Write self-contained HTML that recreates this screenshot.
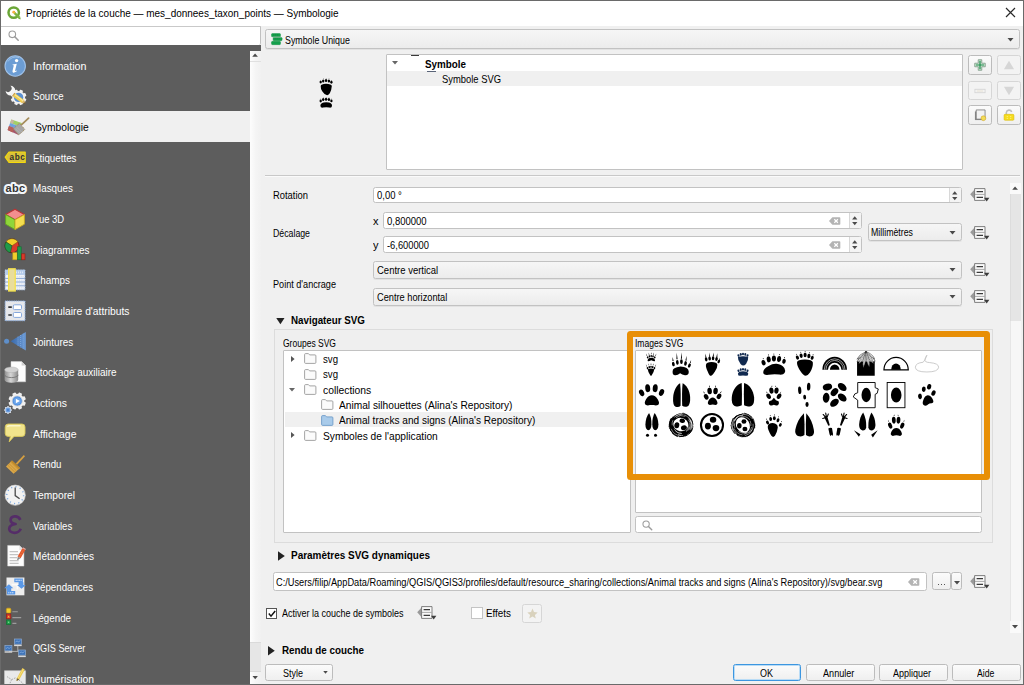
<!DOCTYPE html>
<html><head><meta charset="utf-8"><title>QGIS</title>
<style>
html,body{margin:0;padding:0;}
body{width:1024px;height:685px;overflow:hidden;background:#f0f0f0;font-family:"Liberation Sans",sans-serif;}
#w{position:relative;width:1024px;height:685px;overflow:hidden;}
#w>div{position:absolute;}
#w svg{display:block;width:100%;height:100%;overflow:visible;}
.t{position:absolute;white-space:nowrap;line-height:16px;height:16px;transform-origin:0 50%;display:inline-block;}
.field{background:#fff;border:1px solid #c2c2c2;box-sizing:border-box;border-radius:2.5px;}
.combo{background:linear-gradient(#f6f6f6,#ececec);border:1px solid #c2c2c2;box-sizing:border-box;border-radius:2.5px;box-shadow:0 1px 0 #e2e2e2;}
.btn{background:linear-gradient(#fbfbfb,#efefef);border:1px solid #bcbcbc;box-sizing:border-box;border-radius:2.5px;}
.btn.dis{border-color:#d6d6d6;background:#f3f3f3;}
</style></head>
<body><div id="w">
<div style="left:0px;top:0px;width:1024px;height:685px;background:#f0f0f0;"></div>
<div style="left:1px;top:1px;width:1022px;height:24.8px;background:#fff;"></div>
<div style="left:1px;top:25.8px;width:260px;height:1px;background:#c9c9c9;"></div>
<div style="left:7.2px;top:5.6px;width:14px;height:14px"><svg viewBox="0 0 14 14"><circle cx="6.7" cy="6.6" r="5.2" fill="none" stroke="#6aa636" stroke-width="2.5"/><path d="M7.4 6.8L12.6 11.8" stroke="#7bb342" stroke-width="2.4"/><path d="M11.2 12.6L13.4 13.4L13.6 11.4Z" fill="#6aa636"/><circle cx="6.8" cy="6.2" r="1.4" fill="#f0a830"/><path d="M5.8 5.2L7.8 7.4" stroke="#f6c860" stroke-width="0.7"/></svg></div>
<div style="left:1004.9px;top:7.1px;width:11px;height:11px"><svg viewBox="0 0 11 11"><path d="M1 1L10 10M10 1L1 10" stroke="#2a2a2a" stroke-width="1.15" fill="none"/></svg></div>
<div style="left:1px;top:26.6px;width:259.5px;height:18.1px;background:#fff;border-right:1px solid #c0c0c0;box-sizing:border-box;border-radius:0 0 2px 0;"></div>
<div style="left:8px;top:30px;width:11px;height:11px"><svg viewBox="0 0 11 11"><circle cx="4.3" cy="4.3" r="3.3" fill="none" stroke="#9c9c9c" stroke-width="1.1"/><path d="M6.8 6.8L10.2 10.2" stroke="#9c9c9c" stroke-width="1.5" stroke-linecap="round"/></svg></div>
<div style="left:1px;top:44.7px;width:260.3px;height:6.1px;background:#5d5d5d;"></div>
<div style="left:1px;top:50.5px;width:248.6px;height:640px;background:#5d5d5d;"></div>
<div style="left:1px;top:111.4px;width:248.6px;height:30.8px;background:#f0f0f0;"></div>
<div style="left:249.6px;top:50.5px;width:11.7px;height:634px;background:linear-gradient(to right,#fdfdfd,#f5f5f5 50%,#f1f1f1);"></div>
<div style="left:249.6px;top:61.3px;width:11.7px;height:1px;background:#e0e0e0;"></div>
<div style="left:249.5px;top:642.2px;width:11.6px;height:30px;background:#e6e6e6;border-top:1px solid #dadada;border-bottom:1px solid #dadada;box-sizing:border-box;"></div>
<div style="left:252.2px;top:53.2px;width:6.2px;height:3.8px"><svg viewBox="0 0 6 4"><path d="M0 4L3 0.4L6 4Z" fill="#4a4a4a"/></svg></div>
<div style="left:252.3px;top:676px;width:6.4px;height:3.6px"><svg viewBox="0 0 6 4"><path d="M0 0L6 0L3 3.6Z" fill="#4a4a4a"/></svg></div>
<div style="left:3.2px;top:53.52px;width:24px;height:24px"><svg viewBox="0 0 24 24"><circle cx="12.2" cy="12" r="10.2" fill="#6c9dd4" stroke="#9fc2ea" stroke-width="1.1"/><path d="M5 7.5A9 9 0 0 1 16 3.6" stroke="#b9d5f2" stroke-width="1" fill="none" opacity=".6"/><circle cx="13.6" cy="6.6" r="1.7" fill="#fff"/><path d="M9.6 10.4L13.8 9.8L12.1 16.4Q11.9 17.4 13.6 16.6L13.8 17.2Q10.8 19.2 9.9 18.4Q9.2 17.8 9.6 16.4L10.8 11.6Q10.9 11 9.5 11Z" fill="#fff"/></svg></div>
<div style="left:3.2px;top:84.17px;width:24px;height:24px"><svg viewBox="0 0 24 24"><path d="M7.4 1.8A4.9 4.9 0 1 1 2.6 7A3.3 3.3 0 0 0 7.4 1.8Z" fill="#f6f6f6"/><path d="M8.6 8.6L13 13" stroke="#f2f2f2" stroke-width="3.2"/><circle cx="15.6" cy="13.4" r="6.4" fill="#f1f1f1"/><rect x="13.95" y="5.50" width="3.3" height="2.70" rx="0.7" fill="#f1f1f1" transform="rotate(22.5 15.6 13.4)"/><rect x="13.95" y="5.50" width="3.3" height="2.70" rx="0.7" fill="#f1f1f1" transform="rotate(67.5 15.6 13.4)"/><rect x="13.95" y="5.50" width="3.3" height="2.70" rx="0.7" fill="#f1f1f1" transform="rotate(112.5 15.6 13.4)"/><rect x="13.95" y="5.50" width="3.3" height="2.70" rx="0.7" fill="#f1f1f1" transform="rotate(157.5 15.6 13.4)"/><rect x="13.95" y="5.50" width="3.3" height="2.70" rx="0.7" fill="#f1f1f1" transform="rotate(202.5 15.6 13.4)"/><rect x="13.95" y="5.50" width="3.3" height="2.70" rx="0.7" fill="#f1f1f1" transform="rotate(247.5 15.6 13.4)"/><rect x="13.95" y="5.50" width="3.3" height="2.70" rx="0.7" fill="#f1f1f1" transform="rotate(292.5 15.6 13.4)"/><rect x="13.95" y="5.50" width="3.3" height="2.70" rx="0.7" fill="#f1f1f1" transform="rotate(337.5 15.6 13.4)"/><circle cx="15.6" cy="13.4" r="4.7" fill="#5b8fd0"/><path d="M12.4 9.4L21.1 15.9L18.7 19.1L10 12.6Z" fill="#f0cd4c"/><path d="M11.6 10.5L20.3 17" stroke="#f9e79a" stroke-width="1.1"/><path d="M21.1 15.9L22.8 19.6L18.7 19.1Z" fill="#d9b36a"/><path d="M22 17.9L22.8 19.6L21 19.4Z" fill="#3a2f1c"/><path d="M12.4 9.4L10 12.6L9 11.9L11.4 8.7Z" fill="#c99a3c"/></svg></div>
<div style="left:5.5px;top:114.82px;width:24px;height:24px"><svg viewBox="0 0 24 24"><path d="M5.4 4.6L15.8 7.9L14.5 11.8L4.1 8Z" fill="#a3cf68"/><path d="M5.4 4.6L8 5.4L7 8.9L4.1 8Z" fill="#c9b7a0"/><path d="M4.1 8L14.5 11.8L13.4 15.3L3 11Z" fill="#6fa2dc"/><path d="M3 11L13.4 15.3L12 19.8L1.6 15Z" fill="#a4566e"/><path d="M3 11L8 13.1L6.6 17.4L1.6 15Z" fill="#b8605a"/><path d="M15.6 9.6L22.6 3.2" stroke="#a58d5c" stroke-width="1.8" stroke-linecap="round"/><rect x="9" y="10" width="8.2" height="8.2" transform="rotate(-42 13.1 14.1)" fill="#a6a6a6" stroke="#a08a5c" stroke-width="0.8" stroke-dasharray="1.4 0.8"/><path d="M10.6 12.2L16.2 17.4M9.6 14L14.6 18.6" stroke="#b8b8b8" stroke-width="0.7"/></svg></div>
<div style="left:3.2px;top:145.47px;width:24px;height:24px"><svg viewBox="0 0 24 24"><path d="M2.2 12.2L6 7H22.2V17.5H6Z" fill="#d9c23a" stroke="#f5d90a" stroke-width="1.2" stroke-linejoin="round"/><text x="14.4" y="15.1" font-family="Liberation Sans, sans-serif" font-weight="700" font-size="8.2" letter-spacing="0.5" text-anchor="middle" fill="#2e2e2e">abc</text></svg></div>
<div style="left:3.2px;top:176.12px;width:24px;height:24px"><svg viewBox="0 0 24 24"><text x="12.4" y="15.9" font-family="Liberation Sans, sans-serif" font-weight="700" font-size="11" letter-spacing="0.3" text-anchor="middle" fill="#363636" stroke="#f3f6fa" stroke-width="4.2" stroke-linejoin="round" paint-order="stroke">abc</text></svg></div>
<div style="left:3.2px;top:206.78px;width:24px;height:24px"><svg viewBox="0 0 24 24"><path d="M12 2.2L21.4 7.6L12 12.8L2.6 7.6Z" fill="#f28e8e" stroke="#b93434" stroke-width="1.1" stroke-linejoin="round"/><path d="M2.6 7.6L12 12.8V22.6L2.6 17.2Z" fill="#8fd63a" stroke="#62a420" stroke-width="0.9" stroke-linejoin="round"/><path d="M21.4 7.6L12 12.8V22.6L21.4 17.2Z" fill="#f4de50" stroke="#c9aa20" stroke-width="0.9" stroke-linejoin="round"/></svg></div>
<div style="left:3.2px;top:237.42px;width:24px;height:24px"><svg viewBox="0 0 24 24"><circle cx="9" cy="8.8" r="7" fill="#d83a2a" stroke="#5a1a12" stroke-width="0.7"/><path d="M9 8.8L3 5A7 7 0 0 1 14.8 4.8Z" fill="#f0cf2c" stroke="#6a5a12" stroke-width="0.5"/><path d="M9 8.8L3 5A7 7 0 0 0 7.4 15.6Z" fill="#1f9a4a" stroke="#0f4a22" stroke-width="0.5"/><rect x="9.8" y="15.6" width="4.4" height="7.2" fill="#f0cf2c" stroke="#b8961c" stroke-width="0.6"/><rect x="14.6" y="9.8" width="3.6" height="13" fill="#1f9a4a" stroke="#156c33" stroke-width="0.6"/><rect x="18.6" y="16.8" width="3.4" height="6" fill="#d83a2a" stroke="#8f1f14" stroke-width="0.6"/></svg></div>
<div style="left:3.2px;top:268.07px;width:24px;height:24px"><svg viewBox="0 0 24 24"><rect x="2.1" y="1.9" width="19.9" height="20" fill="#f1f4f9" stroke="#9db4d4" stroke-width="0.9" stroke-dasharray="1.2 0.6"/><rect x="2.1" y="1.9" width="19.9" height="5" fill="#b4cbea"/><path d="M13 4.4H21" stroke="#dfe8f6" stroke-width="1.6" stroke-dasharray="1 1"/><path d="M2.1 10.4H22M2.1 14H22M2.1 17.8H22" stroke="#7f9fd0" stroke-width="0.9"/><path d="M12.4 8.7H21M12.4 12.2H21M12.4 16H21M12.4 19.8H21" stroke="#c9d6ea" stroke-width="0.8" stroke-dasharray="1 0.8"/><rect x="5.7" y="0.8" width="6.5" height="22.2" fill="#e9dd9c" stroke="#f5e24a" stroke-width="1.3"/></svg></div>
<div style="left:3.2px;top:298.72px;width:24px;height:24px"><svg viewBox="0 0 24 24"><rect x="2.1" y="2" width="19.9" height="19.7" fill="#e6e7ea" stroke="#8fb0e0" stroke-width="1" stroke-dasharray="1.2 0.6"/><rect x="10.3" y="5.8" width="8.2" height="4.8" rx="1.2" fill="#fff" stroke="#86a8dc" stroke-width="1"/><rect x="10.3" y="13.5" width="8.2" height="4.9" rx="1.2" fill="#fff" stroke="#86a8dc" stroke-width="1"/><path d="M5.3 8.2H8.8M5.3 16H8.8" stroke="#33373c" stroke-width="1.7"/></svg></div>
<div style="left:3.2px;top:329.37px;width:24px;height:24px"><svg viewBox="0 0 24 24"><defs><linearGradient id="jg" x1="0" x2="1" y1="0" y2="0"><stop offset="0" stop-color="#3868a8"/><stop offset="1" stop-color="#6b9ad6"/></linearGradient></defs><circle cx="3.6" cy="12.2" r="2.5" fill="#5f8fc9"/><path d="M7.6 12.2L22.8 3V21.4Z" fill="url(#jg)"/><path d="M15 7.6V16.8M17.6 6V18.4M20.2 4.6V19.8" stroke="#86aee0" stroke-width="0.8" stroke-dasharray="1 1"/></svg></div>
<div style="left:3.2px;top:360.02px;width:24px;height:24px"><svg viewBox="0 0 24 24"><defs><linearGradient id="dbg" x1="0" x2="1" y1="0" y2="0"><stop offset="0" stop-color="#8e8e8e"/><stop offset="0.45" stop-color="#d6d6d6"/><stop offset="1" stop-color="#8a8a8a"/></linearGradient></defs><path d="M8 1.6H18.6L22.6 5.6V21.8H8Z" fill="#fdfdfd" stroke="#d4d4d4" stroke-width="0.5"/><path d="M18.6 1.6V5.6H22.6Z" fill="#d0d0d0"/><path d="M1.6 9.8V20A6.8 2.8 0 0 0 15.2 20V9.8Z" fill="url(#dbg)"/><ellipse cx="8.4" cy="9.8" rx="6.8" ry="2.8" fill="#d2d2d2" stroke="#a8a8a8" stroke-width="0.4"/><path d="M1.6 14.8A6.8 2.8 0 0 0 15.2 14.8" stroke="#6e6e6e" stroke-width="0.8" fill="none"/></svg></div>
<div style="left:3.2px;top:390.67px;width:24px;height:24px"><svg viewBox="0 0 24 24"><circle cx="14.2" cy="10" r="7.2" fill="#f0f0f0"/><rect x="12.35" y="1.30" width="3.7" height="2.70" rx="0.7" fill="#f0f0f0" transform="rotate(22.5 14.2 10)"/><rect x="12.35" y="1.30" width="3.7" height="2.70" rx="0.7" fill="#f0f0f0" transform="rotate(67.5 14.2 10)"/><rect x="12.35" y="1.30" width="3.7" height="2.70" rx="0.7" fill="#f0f0f0" transform="rotate(112.5 14.2 10)"/><rect x="12.35" y="1.30" width="3.7" height="2.70" rx="0.7" fill="#f0f0f0" transform="rotate(157.5 14.2 10)"/><rect x="12.35" y="1.30" width="3.7" height="2.70" rx="0.7" fill="#f0f0f0" transform="rotate(202.5 14.2 10)"/><rect x="12.35" y="1.30" width="3.7" height="2.70" rx="0.7" fill="#f0f0f0" transform="rotate(247.5 14.2 10)"/><rect x="12.35" y="1.30" width="3.7" height="2.70" rx="0.7" fill="#f0f0f0" transform="rotate(292.5 14.2 10)"/><rect x="12.35" y="1.30" width="3.7" height="2.70" rx="0.7" fill="#f0f0f0" transform="rotate(337.5 14.2 10)"/><circle cx="14.2" cy="10" r="5.1" fill="#4f8fe0" stroke="#d6d6d6" stroke-width="0.8"/><circle cx="14.2" cy="10" r="3.6" fill="#6aa4ea"/><path d="M12.9 7.7L16.9 10L12.9 12.3Z" fill="#fff"/><circle cx="5" cy="19" r="3.0" fill="#dfe6f0"/><rect x="4.15" y="15.10" width="1.7" height="2.10" rx="0.7" fill="#dfe6f0" transform="rotate(0.0 5 19)"/><rect x="4.15" y="15.10" width="1.7" height="2.10" rx="0.7" fill="#dfe6f0" transform="rotate(45.0 5 19)"/><rect x="4.15" y="15.10" width="1.7" height="2.10" rx="0.7" fill="#dfe6f0" transform="rotate(90.0 5 19)"/><rect x="4.15" y="15.10" width="1.7" height="2.10" rx="0.7" fill="#dfe6f0" transform="rotate(135.0 5 19)"/><rect x="4.15" y="15.10" width="1.7" height="2.10" rx="0.7" fill="#dfe6f0" transform="rotate(180.0 5 19)"/><rect x="4.15" y="15.10" width="1.7" height="2.10" rx="0.7" fill="#dfe6f0" transform="rotate(225.0 5 19)"/><rect x="4.15" y="15.10" width="1.7" height="2.10" rx="0.7" fill="#dfe6f0" transform="rotate(270.0 5 19)"/><rect x="4.15" y="15.10" width="1.7" height="2.10" rx="0.7" fill="#dfe6f0" transform="rotate(315.0 5 19)"/><circle cx="5" cy="19" r="2.5" fill="#6ea0e0"/><circle cx="5" cy="19" r="1.2" fill="#4a80cc"/></svg></div>
<div style="left:3.2px;top:421.32px;width:24px;height:24px"><svg viewBox="0 0 24 24"><path d="M5.2 3H19Q22 3 22 6V12.4Q22 15.4 19 15.4H11L6.2 20.8L7.4 15.4H5.2Q2.2 15.4 2.2 12.4V6Q2.2 3 5.2 3Z" fill="#f1e48c" stroke="#d9c85a" stroke-width="0.9"/><path d="M4.6 6Q4.6 4.8 6.4 4.8H17.6" stroke="#fbf6c8" stroke-width="1.4" fill="none"/></svg></div>
<div style="left:3.2px;top:451.97px;width:24px;height:24px"><svg viewBox="0 0 24 24"><path d="M12.8 11.4L20.8 3L22 4.2L14.2 12.8Z" fill="#d7a040"/><path d="M9 8.4L17 16L10.6 21.8L3 14.6Z" fill="#dba84a"/><path d="M7.6 10L15.2 17.4M6 11.6L13.6 19M4.6 13L12 20.4" stroke="#c08a28" stroke-width="0.7"/><path d="M9 8.4L17 16L15.9 17L7.9 9.4Z" fill="#bd8626"/></svg></div>
<div style="left:3.2px;top:482.62px;width:24px;height:24px"><svg viewBox="0 0 24 24"><circle cx="12.2" cy="12.2" r="10.1" fill="#f2f2f2" stroke="#dadada" stroke-width="0.7"/><circle cx="12.2" cy="12.2" r="8.4" fill="none" stroke="#7aa7e0" stroke-width="1.4" stroke-dasharray="1.1 3.3"/><path d="M12.2 4.4V12.6L16.6 15.8" stroke="#4a4a4a" stroke-width="1.3" fill="none"/></svg></div>
<div style="left:3.2px;top:513.27px;width:24px;height:24px"><svg viewBox="0 0 24 24"><path d="M17.4 6.8Q15.6 3.2 11.8 3.4Q7.6 3.8 7.6 7.2Q7.8 10.4 12.6 11Q6.4 11.6 6.2 15.8Q6.4 19.6 11.6 19.8Q16 19.8 17.8 15.8" fill="none" stroke="#552d68" stroke-width="2.7" stroke-linejoin="round"/></svg></div>
<div style="left:3.2px;top:543.92px;width:24px;height:24px"><svg viewBox="0 0 24 24"><path d="M4.7 1.4H16.4L20.9 5.9V22.1H4.7Z" fill="#fdfdfd" stroke="#d4d4d4" stroke-width="0.5"/><path d="M16.4 1.4V5.9H20.9Z" fill="#e2e2e2"/><path d="M6.6 7.6H15M6.6 10.6H15.6M6.6 13.6H14M6.6 16.6H15.6M6.6 19.4H15.6" stroke="#c4c4c4" stroke-width="1.1"/><path d="M17.59 14.17L22.34 6.07L19.4 4.35L14.65 12.45Z" fill="#e4572c"/><path d="M16.6 12.6L20.4 6.2" stroke="#f08a4a" stroke-width="0.9" stroke-dasharray="1 1"/><path d="M22.34 6.07L19.4 4.35L20 3.32L22.95 5.04Z" fill="#eaa8a0"/><path d="M17.59 14.17L14.65 12.45L14.6 15.9Z" fill="#8e8e8e"/><path d="M15.5 14.9L14.6 15.9L14.62 14.4Z" fill="#3a3a3a"/></svg></div>
<div style="left:3.2px;top:574.57px;width:24px;height:24px"><svg viewBox="0 0 24 24"><rect x="3.5" y="2.5" width="17.9" height="17.8" fill="#ededed"/><path d="M8.6 9.6H14.4V14.6" fill="none" stroke="#fafafa" stroke-width="1.6"/><path d="M11.3 3.5H19.9V7.3H20.4V10H22.8L18.5 13.8L14.1 10H15.6V7.3H11.3Z" fill="#5a98e6"/><path d="M12.6 5.4H18.6" stroke="#cfe2fa" stroke-width="1.1" stroke-dasharray="1.2 0.6"/><path d="M5.96 9.3L10.3 13.3H8.2V16H12.2V19.6H4V16H3.7V13.3H1.1Z" fill="#5a98e6"/><path d="M5.2 17.8H11" stroke="#cfe2fa" stroke-width="1.1" stroke-dasharray="1.2 0.6"/></svg></div>
<div style="left:3.2px;top:605.22px;width:24px;height:24px"><svg viewBox="0 0 24 24"><rect x="3.4" y="3.2" width="4.4" height="4.8" rx="1.2" fill="#f0cf2c" stroke="#d49a1a" stroke-width="0.7"/><rect x="3.4" y="9" width="4.4" height="4.8" fill="#d83a2a" stroke="#9a1f14" stroke-width="0.7"/><path d="M4.4 12.6L5.6 10.4L6.8 12.6Z" fill="#f4c43c"/><rect x="3.4" y="15" width="4.4" height="4.6" fill="#1f9a4a" stroke="#14702f" stroke-width="0.7"/><circle cx="5.6" cy="17.3" r="0.8" fill="#7fe08a"/><path d="M9.4 6.8H14.8M9.4 12.6H18.2M9.4 18.4H13.4" stroke="#9c9c9c" stroke-width="1.1"/></svg></div>
<div style="left:3.2px;top:635.88px;width:24px;height:24px"><svg viewBox="0 0 24 24"><path d="M6 15.4H15.4M14.8 9V15.4" stroke="#b0b0b0" stroke-width="1" fill="none"/><rect x="1.9" y="9.6" width="7" height="5.2" fill="#3f74b8" stroke="#8fabcf" stroke-width="0.7"/><path d="M2.9 12.6L4.5 11.6L6.300000000000001 12.399999999999999L7.9 11.0" stroke="#8fb4e4" stroke-width="0.7" fill="none"/><rect x="1.5999999999999999" y="15.3" width="7.6" height="1.4" fill="#d8d8d8"/><rect x="11.4" y="3" width="7" height="5.2" fill="#3f74b8" stroke="#8fabcf" stroke-width="0.7"/><path d="M12.4 6L14.0 5L15.8 5.8L17.4 4.4" stroke="#8fb4e4" stroke-width="0.7" fill="none"/><rect x="11.1" y="8.7" width="7.6" height="1.4" fill="#d8d8d8"/><rect x="15.5" y="14" width="7" height="5.2" fill="#3f74b8" stroke="#8fabcf" stroke-width="0.7"/><path d="M16.5 17L18.1 16L19.9 16.8L21.5 15.4" stroke="#8fb4e4" stroke-width="0.7" fill="none"/><rect x="15.2" y="19.7" width="7.6" height="1.4" fill="#d8d8d8"/></svg></div>
<div style="left:3.2px;top:666.52px;width:24px;height:24px"><svg viewBox="0 0 24 24"><path d="M1.5 3.7H22.6V24H1.5Z" fill="#e9e9e9" stroke="#d0d0d0" stroke-width="0.5"/><path d="M4 9.6L8.6 12.6L6.4 17.6L11 19.6M8.6 12.6L13 10.6M16 13L20 16.4L18 20" stroke="#a4a4a4" stroke-width="0.9" fill="none" stroke-dasharray="1.6 1"/><path d="M13.9 11.2L19.4 1.1L21.8 2.4L16.3 12.5L13.6 13.9Z" fill="#ebc94e"/><path d="M15 11.6L20.4 2" stroke="#f7e28a" stroke-width="0.8"/><path d="M13.9 11.2L16.3 12.5L13.6 13.9Z" fill="#6a5a3a"/></svg></div>
<div class="combo" style="left:265.3px;top:29.3px;width:755px;height:19.7px;"></div>
<div style="left:271.3px;top:33px;width:11.5px;height:12.2px"><svg viewBox="0 0 11.5 11.5"><rect x="0.5" y="0.2" width="9" height="3.3" rx="0.9" fill="#14a04c" stroke="#0b8a3c" stroke-width="0.4"/><rect x="2.1" y="4.1" width="9" height="3.3" rx="0.9" fill="#14a04c" stroke="#0b8a3c" stroke-width="0.4"/><rect x="0.5" y="8" width="9" height="3.3" rx="0.9" fill="#14a04c" stroke="#0b8a3c" stroke-width="0.4"/><path d="M2 1.5H8M3.6 5.4H9.6" stroke="#0b7a36" stroke-width="0.5" stroke-dasharray="1.2 0.8"/><path d="M2.6 3.8H9.4" stroke="#9ab0a0" stroke-width="0.6"/></svg></div>
<div style="left:1007px;top:37.5px;width:7px;height:4px"><svg viewBox="0 0 6 4"><path d="M0 0L6 0L3 3.6Z" fill="#4a4a4a"/></svg></div>
<div style="left:318.9px;top:77.5px;width:14px;height:30px"><svg viewBox="0 0 14 30"><g fill="#000"><ellipse cx="1.7" cy="4.1" rx="1.15" ry="1.45"/><ellipse cx="4.2" cy="2.9" rx="1.2" ry="1.5"/><ellipse cx="7.05" cy="2.4" rx="1.2" ry="1.5"/><ellipse cx="9.9" cy="2.9" rx="1.2" ry="1.5"/><ellipse cx="12.4" cy="4.2" rx="1.15" ry="1.45"/><path d="M1.4 1.9L1.7 2.8L2 1.9ZM4 0.6L4.3 1.5L4.6 0.6ZM6.8 0.2L7.1 1.1L7.4 0.2ZM9.7 0.6L10 1.5L10.3 0.6ZM12.3 2L12.6 2.9L12.9 2Z"/><path d="M1.7 8Q2 5.9 7 5.7Q12.4 5.9 12.8 8Q12.6 12 10.8 15.2Q9 17.6 7.6 17.1Q5.4 16.4 3.4 13.4Q1.4 10.4 1.7 8Z"/><ellipse cx="1.7" cy="23" rx="1.15" ry="1.45"/><ellipse cx="4.2" cy="21.6" rx="1.2" ry="1.5"/><ellipse cx="7.05" cy="21.2" rx="1.2" ry="1.5"/><ellipse cx="9.9" cy="21.6" rx="1.2" ry="1.5"/><ellipse cx="12.4" cy="22.9" rx="1.15" ry="1.45"/><path d="M1.4 20.8L1.7 21.6L2 20.8ZM4 19.4L4.3 20.2L4.6 19.4ZM6.8 19L7.1 19.8L7.4 19ZM9.7 19.4L10 20.2L10.3 19.4ZM12.3 20.7L12.6 21.5L12.9 20.7Z"/><path d="M1.4 27.8Q1.4 25.4 4.6 24.6Q7.2 23.9 10 24.6Q13 25.4 13 27.8Q13 29.9 10.4 29.6Q7.2 28.8 4 29.6Q1.4 29.9 1.4 27.8Z"/></g></svg></div>
<div class="field" style="left:386px;top:54.3px;width:576.5px;height:115.6px;border-radius:1px;"></div>
<div style="left:387px;top:71.3px;width:574.5px;height:15.2px;background:#f0f0f0;"></div>
<div style="left:392px;top:61px;width:6px;height:4px"><svg viewBox="0 0 6 4"><path d="M0 0L6 0L3 3.6Z" fill="#666"/></svg></div>
<div style="left:410.6px;top:55.4px;width:8.6px;height:1.1px;background:#3a3a3a;"></div>
<div style="left:427.4px;top:71.2px;width:9px;height:1.1px;background:#5a6478;"></div>
<div class="btn" style="left:968.4px;top:55.2px;width:23.3px;height:19.8px;"><div style="left:4.6px;top:3.2px;width:12px;height:12px;position:absolute"><svg viewBox="0 0 13 13"><path d="M4.6 0.8H8.4V4.6H12.2V8.4H8.4V12.2H4.6V8.4H0.8V4.6H4.6Z" fill="#d4ead9" stroke="#7a9a84" stroke-width="0.9"/><path d="M6.5 2V11M2 6.5H11" stroke="#1d8a4a" stroke-width="1.3"/></svg></div></div>
<div class="btn dis" style="left:997.3px;top:55.2px;width:23.3px;height:19.8px;"><div style="left:4.6px;top:3.2px;width:12px;height:12px;position:absolute"><svg viewBox="0 0 13 13"><path d="M6.5 2L12 11H1Z" fill="#d6d6d6"/></svg></div></div>
<div class="btn dis" style="left:968.4px;top:80.5px;width:23.3px;height:19.8px;"><div style="left:4.6px;top:3.2px;width:12px;height:12px;position:absolute"><svg viewBox="0 0 13 13"><rect x="1" y="4.6" width="11" height="3.8" fill="#f4f4f4" stroke="#d0d0d0" stroke-width="0.8"/><path d="M3 6.5H10" stroke="#e6e0d0" stroke-width="1"/></svg></div></div>
<div class="btn dis" style="left:997.3px;top:80.5px;width:23.3px;height:19.8px;"><div style="left:4.6px;top:3.2px;width:12px;height:12px;position:absolute"><svg viewBox="0 0 13 13"><path d="M1 2H12L6.5 11Z" fill="#d6d6d6"/></svg></div></div>
<div class="btn" style="left:968.4px;top:104.8px;width:23.3px;height:19.8px;"><div style="left:4.6px;top:3.2px;width:12px;height:12px;position:absolute"><svg viewBox="0 0 13 13"><path d="M1 2.6H9.4V12H1Z" fill="#8a8a8a"/><path d="M2.4 1H12V11H2.4Z" fill="#f2f2f2" stroke="#6e6e6e" stroke-width="0.8"/><circle cx="10.2" cy="10" r="2.6" fill="#f2dc58" stroke="#d0a422" stroke-width="0.6"/></svg></div></div>
<div class="btn" style="left:997.3px;top:104.8px;width:23.3px;height:19.8px;"><div style="left:4.6px;top:3.2px;width:12px;height:12px;position:absolute"><svg viewBox="0 0 13 13"><path d="M3.6 6V3.8A3 3 0 0 1 9.4 3.2" fill="none" stroke="#bdbdbd" stroke-width="1.7"/><rect x="1.2" y="5.8" width="10.6" height="6.4" rx="1" fill="#f6dc1e" stroke="#d9b800" stroke-width="0.6"/><path d="M4 8.2H5.5M7.5 8.2H9M4 10.2H5.5M7.5 10.2H9" stroke="#fff58a" stroke-width="0.8"/></svg></div></div>
<div style="left:265.3px;top:175px;width:755px;height:1px;background:#c8c8c8;"></div>
<div style="left:265.3px;top:176px;width:755px;height:1px;background:#fafafa;"></div>
<div style="left:1009.5px;top:182.6px;width:11.3px;height:450.4px;background:#fafafa;"></div>
<div style="left:1009.5px;top:194.2px;width:11.3px;height:126.8px;background:#e5e5e5;border-left:1px solid #dcdcdc;box-sizing:border-box;"></div>
<div style="left:1009.5px;top:321px;width:11.3px;height:300px;background:#f7f7f7;border-left:1px solid #e6e6e6;box-sizing:border-box;"></div>
<div style="left:1012px;top:186.4px;width:6.2px;height:3.8px"><svg viewBox="0 0 6 4"><path d="M0 4L3 0.4L6 4Z" fill="#4a4a4a"/></svg></div>
<div style="left:1011.7px;top:625px;width:6px;height:4px"><svg viewBox="0 0 6 4"><path d="M0 0L6 0L3 3.6Z" fill="#4a4a4a"/></svg></div>
<div class="field" style="left:372.6px;top:186.5px;width:589px;height:16.8px;"></div>
<div style="left:949px;top:188px;width:11.5px;height:14.3px;border-left:1px solid #d8d8d8;background:#f4f4f4;box-sizing:border-box;"></div>
<div style="left:952.3px;top:190.5px;width:5.5px;height:3.5px"><svg viewBox="0 0 6 4"><path d="M0 4L3 0.4L6 4Z" fill="#4a4a4a"/></svg></div><div style="left:952.3px;top:196.5px;width:5.5px;height:3.5px"><svg viewBox="0 0 6 4"><path d="M0 0L6 0L3 3.6Z" fill="#4a4a4a"/></svg></div>
<div style="left:970px;top:188px;width:19.5px;height:14.5px"><svg viewBox="0 0 19.5 14.5"><path d="M0.2 6.3L4.8 1.2V11.6Z" fill="#9a9a9a"/><path d="M4.6 0.6H15V12.4H4.6Z" fill="#fafafa" stroke="#727272" stroke-width="0.9"/><path d="M6.6 3.6H13M6.6 9.4H13" stroke="#3a3a3a" stroke-width="1.3"/><path d="M5 6.4H14.6" stroke="#8a8a8a" stroke-width="0.7"/><path d="M14 9.8H19.4L16.7 13.4Z" fill="#3c3c3c"/></svg></div>
<div class="field" style="left:382.8px;top:212px;width:479.2px;height:17px;"></div>
<div style="left:849px;top:213.3px;width:12px;height:14.3px;border-left:1px solid #d8d8d8;background:#f4f4f4;box-sizing:border-box;"></div>
<div style="left:852.4px;top:215.7px;width:5.5px;height:3.5px"><svg viewBox="0 0 6 4"><path d="M0 4L3 0.4L6 4Z" fill="#4a4a4a"/></svg></div><div style="left:852.4px;top:221.7px;width:5.5px;height:3.5px"><svg viewBox="0 0 6 4"><path d="M0 0L6 0L3 3.6Z" fill="#4a4a4a"/></svg></div>
<div style="left:829px;top:216.5px;width:11.5px;height:8px"><svg viewBox="0 0 11.5 8"><path d="M0 4L3.4 0.3H10.6Q11.3 0.3 11.3 1V7Q11.3 7.7 10.6 7.7H3.4Z" fill="#b4b4b4"/><path d="M5.3 2.3L8.9 5.7M8.9 2.3L5.3 5.7" stroke="#fff" stroke-width="1.2"/></svg></div>
<div class="field" style="left:382.8px;top:235.7px;width:479.2px;height:17px;"></div>
<div style="left:849px;top:237.3px;width:12px;height:14.3px;border-left:1px solid #d8d8d8;background:#f4f4f4;box-sizing:border-box;"></div>
<div style="left:852.4px;top:239.7px;width:5.5px;height:3.5px"><svg viewBox="0 0 6 4"><path d="M0 4L3 0.4L6 4Z" fill="#4a4a4a"/></svg></div><div style="left:852.4px;top:245.7px;width:5.5px;height:3.5px"><svg viewBox="0 0 6 4"><path d="M0 0L6 0L3 3.6Z" fill="#4a4a4a"/></svg></div>
<div style="left:829px;top:240.5px;width:11.5px;height:8px"><svg viewBox="0 0 11.5 8"><path d="M0 4L3.4 0.3H10.6Q11.3 0.3 11.3 1V7Q11.3 7.7 10.6 7.7H3.4Z" fill="#b4b4b4"/><path d="M5.3 2.3L8.9 5.7M8.9 2.3L5.3 5.7" stroke="#fff" stroke-width="1.2"/></svg></div>
<div class="combo" style="left:867.5px;top:223.2px;width:94px;height:18.3px;"></div>
<div style="left:948.5px;top:230.5px;width:7px;height:4px"><svg viewBox="0 0 6 4"><path d="M0 0L6 0L3 3.6Z" fill="#4a4a4a"/></svg></div>
<div style="left:970px;top:225.5px;width:19.5px;height:14.5px"><svg viewBox="0 0 19.5 14.5"><path d="M0.2 6.3L4.8 1.2V11.6Z" fill="#9a9a9a"/><path d="M4.6 0.6H15V12.4H4.6Z" fill="#fafafa" stroke="#727272" stroke-width="0.9"/><path d="M6.6 3.6H13M6.6 9.4H13" stroke="#3a3a3a" stroke-width="1.3"/><path d="M5 6.4H14.6" stroke="#8a8a8a" stroke-width="0.7"/><path d="M14 9.8H19.4L16.7 13.4Z" fill="#3c3c3c"/></svg></div>
<div class="combo" style="left:372.6px;top:260.6px;width:589px;height:18.4px;"></div>
<div style="left:948.5px;top:267.7px;width:7px;height:4px"><svg viewBox="0 0 6 4"><path d="M0 0L6 0L3 3.6Z" fill="#4a4a4a"/></svg></div>
<div style="left:970px;top:262.5px;width:19.5px;height:14.5px"><svg viewBox="0 0 19.5 14.5"><path d="M0.2 6.3L4.8 1.2V11.6Z" fill="#9a9a9a"/><path d="M4.6 0.6H15V12.4H4.6Z" fill="#fafafa" stroke="#727272" stroke-width="0.9"/><path d="M6.6 3.6H13M6.6 9.4H13" stroke="#3a3a3a" stroke-width="1.3"/><path d="M5 6.4H14.6" stroke="#8a8a8a" stroke-width="0.7"/><path d="M14 9.8H19.4L16.7 13.4Z" fill="#3c3c3c"/></svg></div>
<div class="combo" style="left:372.6px;top:287.7px;width:589px;height:18.6px;"></div>
<div style="left:948.5px;top:295px;width:7px;height:4px"><svg viewBox="0 0 6 4"><path d="M0 0L6 0L3 3.6Z" fill="#4a4a4a"/></svg></div>
<div style="left:970px;top:290px;width:19.5px;height:14.5px"><svg viewBox="0 0 19.5 14.5"><path d="M0.2 6.3L4.8 1.2V11.6Z" fill="#9a9a9a"/><path d="M4.6 0.6H15V12.4H4.6Z" fill="#fafafa" stroke="#727272" stroke-width="0.9"/><path d="M6.6 3.6H13M6.6 9.4H13" stroke="#3a3a3a" stroke-width="1.3"/><path d="M5 6.4H14.6" stroke="#8a8a8a" stroke-width="0.7"/><path d="M14 9.8H19.4L16.7 13.4Z" fill="#3c3c3c"/></svg></div>
<div style="left:275.8px;top:317.8px;width:8.8px;height:6.2px"><svg viewBox="0 0 8 6"><path d="M0 0L8 0L4 6Z" fill="#222"/></svg></div>
<div style="left:274px;top:328.7px;width:719px;height:214.5px;border:1px solid #dcdcdc;box-sizing:border-box;background:#efefef;"></div>
<div class="field" style="left:283.2px;top:349.7px;width:348px;height:183.5px;border-radius:1px;"></div>
<div style="left:284.7px;top:412px;width:345.5px;height:15.2px;background:#f0f0f0;"></div>
<div style="left:290.6px;top:355.5px;width:4px;height:6px"><svg viewBox="0 0 4 6"><path d="M0 0L3.6 3L0 6Z" fill="#555"/></svg></div>
<div style="left:289.4px;top:387.6px;width:6px;height:4px"><svg viewBox="0 0 6 4"><path d="M0 0L6 0L3 3.6Z" fill="#666"/></svg></div>
<div style="left:290.6px;top:432.3px;width:4px;height:6px"><svg viewBox="0 0 4 6"><path d="M0 0L3.6 3L0 6Z" fill="#555"/></svg></div>
<div style="left:304.2px;top:353.2px;width:12.5px;height:11px"><svg viewBox="0 0 12.5 11"><path d="M0.6 1.6Q0.6 0.6 1.6 0.6H4.4L5.6 1.9H11Q11.9 1.9 11.9 2.9V9.4Q11.9 10.4 10.9 10.4H1.6Q0.6 10.4 0.6 9.4Z" fill="#fbfbfb" stroke="#9a9a9a" stroke-width="0.9"/></svg></div>
<div style="left:304.2px;top:368.7px;width:12.5px;height:11px"><svg viewBox="0 0 12.5 11"><path d="M0.6 1.6Q0.6 0.6 1.6 0.6H4.4L5.6 1.9H11Q11.9 1.9 11.9 2.9V9.4Q11.9 10.4 10.9 10.4H1.6Q0.6 10.4 0.6 9.4Z" fill="#fbfbfb" stroke="#9a9a9a" stroke-width="0.9"/></svg></div>
<div style="left:304.2px;top:384.0px;width:12.5px;height:11px"><svg viewBox="0 0 12.5 11"><path d="M0.6 1.6Q0.6 0.6 1.6 0.6H4.4L5.6 1.9H11Q11.9 1.9 11.9 2.9V9.4Q11.9 10.4 10.9 10.4H1.6Q0.6 10.4 0.6 9.4Z" fill="#fbfbfb" stroke="#9a9a9a" stroke-width="0.9"/></svg></div>
<div style="left:321.3px;top:399.3px;width:12.5px;height:11px"><svg viewBox="0 0 12.5 11"><path d="M0.6 1.6Q0.6 0.6 1.6 0.6H4.4L5.6 1.9H11Q11.9 1.9 11.9 2.9V9.4Q11.9 10.4 10.9 10.4H1.6Q0.6 10.4 0.6 9.4Z" fill="#fbfbfb" stroke="#9a9a9a" stroke-width="0.9"/></svg></div>
<div style="left:321.3px;top:414.7px;width:12.5px;height:11px"><svg viewBox="0 0 12.5 11"><path d="M0.6 1.6Q0.6 0.6 1.6 0.6H4.4L5.6 1.9H11Q11.9 1.9 11.9 2.9V9.4Q11.9 10.4 10.9 10.4H1.6Q0.6 10.4 0.6 9.4Z" fill="#a9cbea" stroke="#6f9cc8" stroke-width="0.9"/></svg></div>
<div style="left:304.2px;top:429.9px;width:12.5px;height:11px"><svg viewBox="0 0 12.5 11"><path d="M0.6 1.6Q0.6 0.6 1.6 0.6H4.4L5.6 1.9H11Q11.9 1.9 11.9 2.9V9.4Q11.9 10.4 10.9 10.4H1.6Q0.6 10.4 0.6 9.4Z" fill="#fbfbfb" stroke="#9a9a9a" stroke-width="0.9"/></svg></div>
<div class="field" style="left:635.3px;top:349.7px;width:347px;height:163px;border-radius:1px;"></div>
<div class="field" style="left:635.3px;top:515.7px;width:347px;height:17.5px;"></div>
<div style="left:642px;top:519.5px;width:10.5px;height:10.5px"><svg viewBox="0 0 11 11"><circle cx="4.3" cy="4.3" r="3.3" fill="none" stroke="#9c9c9c" stroke-width="1.1"/><path d="M6.8 6.8L10.2 10.2" stroke="#9c9c9c" stroke-width="1.5" stroke-linecap="round"/></svg></div>
<div style="left:636.5px;top:350.4px;width:28px;height:28px"><svg viewBox="0 0 26 26"><g fill="#000" stroke="none"><ellipse cx="9.90" cy="6.90" rx="0.75" ry="1.0" transform="rotate(-18.0 9.90 6.90)"/><path d="M8.95 5.30L8.30 3.30L9.65 5.30Z"/><ellipse cx="11.55" cy="5.92" rx="0.75" ry="1.0" transform="rotate(-9.0 11.55 5.92)"/><path d="M10.90 4.33L10.75 2.32L11.60 4.33Z"/><ellipse cx="13.20" cy="5.60" rx="0.75" ry="1.0" transform="rotate(0.0 13.20 5.60)"/><path d="M12.85 4.00L13.20 2.00L13.55 4.00Z"/><ellipse cx="14.85" cy="5.92" rx="0.75" ry="1.0" transform="rotate(9.0 14.85 5.92)"/><path d="M14.80 4.33L15.65 2.32L15.50 4.33Z"/><ellipse cx="16.50" cy="6.90" rx="0.75" ry="1.0" transform="rotate(18.0 16.50 6.90)"/><path d="M16.75 5.30L18.10 3.30L17.45 5.30Z"/><path d="M9.8 10.3Q10 7.3 13.2 7.3Q16.6 7.3 16.8 10.3Q15.8 10.8 13.3 9.5Q10.8 10.8 9.8 10.3Z"/><ellipse cx="9.80" cy="16.90" rx="0.75" ry="1.05" transform="rotate(-18.0 9.80 16.90)"/><path d="M8.85 15.25L8.20 13.25L9.55 15.25Z"/><ellipse cx="11.40" cy="15.92" rx="0.75" ry="1.05" transform="rotate(-9.0 11.40 15.92)"/><path d="M10.75 14.27L10.60 12.27L11.45 14.27Z"/><ellipse cx="13.00" cy="15.60" rx="0.75" ry="1.05" transform="rotate(0.0 13.00 15.60)"/><path d="M12.65 13.95L13.00 11.95L13.35 13.95Z"/><ellipse cx="14.60" cy="15.92" rx="0.75" ry="1.05" transform="rotate(9.0 14.60 15.92)"/><path d="M14.55 14.27L15.40 12.27L15.25 14.27Z"/><ellipse cx="16.20" cy="16.90" rx="0.75" ry="1.05" transform="rotate(18.0 16.20 16.90)"/><path d="M16.45 15.25L17.80 13.25L17.15 15.25Z"/><path d="M10 17.8Q13 16.6 16 17.8Q15.8 20.4 13.7 23.4Q13 24.4 12.3 23.4Q10.2 20.4 10 17.8Z"/></g></svg></div>
<div style="left:667.2px;top:350.4px;width:28px;height:28px"><svg viewBox="0 0 26 26"><g fill="#000" stroke="none"><ellipse cx="5.9" cy="13.1" rx="1.25" ry="2.1" transform="rotate(-14 5.9 13.1)"/><ellipse cx="9.6" cy="11.4" rx="1.25" ry="2.2" transform="rotate(-6 9.6 11.4)"/><ellipse cx="13.4" cy="10.9" rx="1.25" ry="2.2"/><ellipse cx="17.2" cy="12.5" rx="1.25" ry="2.2" transform="rotate(10 17.2 12.5)"/><ellipse cx="20.8" cy="14.4" rx="1.2" ry="2.1" transform="rotate(22 20.8 14.4)"/><path d="M6.15 10.14L5.20 6.40L5.05 10.26Z"/><path d="M9.85 8.57L9.00 2.40L8.75 8.63Z"/><path d="M13.95 8.21L13.50 2.20L12.85 8.19Z"/><path d="M18.14 9.87L18.20 5.40L17.06 9.73Z"/><path d="M22.08 12.14L22.40 9.20L21.12 11.86Z"/><path d="M5.2 20Q5 16.2 12.6 15.4Q20 16 20.2 20Q20.4 23.9 16.6 23.5Q14 22.9 12.2 21.5Q10 23.1 8 23.5Q5 23.9 5.2 20Z"/></g></svg></div>
<div style="left:698px;top:350.4px;width:28px;height:28px"><svg viewBox="0 0 26 26"><g fill="#000" stroke="none"><ellipse cx="7.6" cy="8.7" rx="1.2" ry="1.9" transform="rotate(-12 7.6 8.7)"/><ellipse cx="10.8" cy="7.9" rx="1.2" ry="1.9" transform="rotate(-4 10.8 7.9)"/><ellipse cx="14" cy="7.6" rx="1.2" ry="1.9" transform="rotate(2 14 7.6)"/><ellipse cx="17.2" cy="8.3" rx="1.2" ry="1.9" transform="rotate(10 17.2 8.3)"/><ellipse cx="19.3" cy="10.7" rx="1.1" ry="1.7" transform="rotate(24 19.3 10.7)"/><path d="M7.80 6.96L7.00 3.30L6.80 7.04Z"/><path d="M11.30 6.20L10.80 2.00L10.30 6.20Z"/><path d="M14.70 5.94L14.50 2.40L13.70 5.86Z"/><path d="M18.00 6.66L17.90 3.00L17.00 6.54Z"/><path d="M20.24 9.31L20.30 7.20L19.36 9.09Z"/><path d="M7.4 13.6Q7.8 11.2 12.6 11.2Q17.6 11.2 18 13.8Q18.2 16.8 15.6 20.2Q13.2 24 12 24Q10.6 24 9.2 20.4Q7 16 7.4 13.6Z"/></g></svg></div>
<div style="left:729.2px;top:350.4px;width:28px;height:28px"><svg viewBox="0 0 26 26"><g fill="#10294f"><ellipse cx="8.80" cy="5.10" rx="0.95" ry="1.25" transform="rotate(-18.0 8.80 5.10)"/><ellipse cx="10.90" cy="4.05" rx="0.95" ry="1.25" transform="rotate(-9.0 10.90 4.05)"/><ellipse cx="13.00" cy="3.70" rx="0.95" ry="1.25" transform="rotate(0.0 13.00 3.70)"/><ellipse cx="15.10" cy="4.05" rx="0.95" ry="1.25" transform="rotate(9.0 15.10 4.05)"/><ellipse cx="17.20" cy="5.10" rx="0.95" ry="1.25" transform="rotate(18.0 17.20 5.10)"/><path d="M8.3 6.6Q13 4.9 17.8 6.6Q18.2 9.8 15.8 13Q13.2 15.8 10.7 13Q8 9.8 8.3 6.6Z"/><ellipse cx="8.80" cy="19.20" rx="0.95" ry="1.2" transform="rotate(-18.0 8.80 19.20)"/><ellipse cx="10.90" cy="18.22" rx="0.95" ry="1.2" transform="rotate(-9.0 10.90 18.22)"/><ellipse cx="13.00" cy="17.90" rx="0.95" ry="1.2" transform="rotate(0.0 13.00 17.90)"/><ellipse cx="15.10" cy="18.22" rx="0.95" ry="1.2" transform="rotate(9.0 15.10 18.22)"/><ellipse cx="17.20" cy="19.20" rx="0.95" ry="1.2" transform="rotate(18.0 17.20 19.20)"/><path d="M8.3 22Q8.6 19.7 13 19.7Q17.6 19.7 17.9 22Q18 24.2 15.4 24Q13 23.4 10.6 24Q8.2 24.2 8.3 22Z"/></g></svg></div>
<div style="left:760px;top:350.4px;width:28px;height:28px"><svg viewBox="0 0 26 26"><g fill="#000" stroke="none"><ellipse cx="3.3" cy="11.8" rx="1.8" ry="2.6" transform="rotate(-18 3.3 11.8)"/><ellipse cx="8.1" cy="8.7" rx="1.9" ry="2.8" transform="rotate(-8 8.1 8.7)"/><ellipse cx="12.9" cy="7.9" rx="1.9" ry="2.8"/><ellipse cx="17.7" cy="8.3" rx="1.9" ry="2.8" transform="rotate(6 17.7 8.3)"/><ellipse cx="22.3" cy="10.5" rx="1.6" ry="2.3" transform="rotate(16 22.3 10.5)"/><ellipse cx="3" cy="8" rx="0.4" ry="0.6"/><ellipse cx="7.8" cy="4.6" rx="0.4" ry="0.6"/><ellipse cx="12.9" cy="3.8" rx="0.4" ry="0.6"/><ellipse cx="18" cy="4.2" rx="0.4" ry="0.6"/><ellipse cx="22.8" cy="7" rx="0.4" ry="0.6"/><path d="M3 20.6Q3.2 17.4 7.6 15Q12 12.4 15.4 12.8Q20 13.4 22.6 16.6Q24 19 22.8 21.4Q21.6 23.2 18 22.8Q13 22 8 23Q3 23.6 3 20.6Z"/></g></svg></div>
<div style="left:791px;top:350.4px;width:28px;height:28px"><svg viewBox="0 0 26 26"><g fill="#000" stroke="none"><ellipse cx="5.95" cy="7" rx="1.4" ry="2.0" transform="rotate(-20 5.95 7)"/><ellipse cx="9.4" cy="5.25" rx="1.45" ry="2.1" transform="rotate(-8 9.4 5.25)"/><ellipse cx="13.1" cy="4.65" rx="1.45" ry="2.1"/><ellipse cx="16.6" cy="5.5" rx="1.45" ry="2.1" transform="rotate(8 16.6 5.5)"/><ellipse cx="19.7" cy="7.25" rx="1.35" ry="1.9" transform="rotate(20 19.7 7.25)"/><ellipse cx="5.3" cy="4" rx="0.35" ry="0.6"/><ellipse cx="9.1" cy="2.2" rx="0.35" ry="0.6"/><ellipse cx="13.1" cy="1.6" rx="0.35" ry="0.6"/><ellipse cx="17" cy="2.5" rx="0.35" ry="0.6"/><ellipse cx="20.5" cy="4.4" rx="0.35" ry="0.6"/><path d="M5.6 11.4Q6 8.8 12.8 8.8Q19.8 8.8 20.3 11.6Q20.6 16 17.6 21Q15.4 24.2 13.6 24Q11.4 23.8 9 20Q5.2 14.6 5.6 11.4Z"/></g></svg></div>
<div style="left:821.3px;top:350.4px;width:28px;height:28px"><svg viewBox="0 0 26 26"><path d="M1.3 18.3A11.4 12 0 0 1 24.1 18.3Z" fill="#000"/><path d="M3.1 18.3A9.6 10.1 0 0 1 22.3 18.3" fill="none" stroke="#fff" stroke-width="0.55"/><path d="M4.6 18.3A8.1 8.6 0 0 1 20.8 18.3" fill="none" stroke="#fff" stroke-width="0.55"/><path d="M6.4 18.6A6.3 6.7 0 0 1 19 18.6Z" fill="#fff"/><path d="M8.3 18.3A4.4 4.9 0 0 1 17.1 18.3Z" fill="#000"/></svg></div>
<div style="left:851.8px;top:350.4px;width:28px;height:28px"><svg viewBox="0 0 26 26"><path d="M4.7 11Q7.6 5 13 1.5Q18.6 4.4 21.1 9.6V11Z" fill="#fff" stroke="#000" stroke-width="0.6"/><rect x="4.7" y="11" width="16.4" height="12.9" fill="#000"/><path d="M13.00 1.50Q9.25 7.65 4.57 8.57Q6.30 4.12 13.00 1.50Z" fill="#fff" stroke="#000" stroke-width="0.4"/><path d="M10.70 3.43L5.72 7.61" stroke="#000" stroke-width="0.3"/><path d="M13.00 1.50Q19.42 3.88 20.97 8.18Q16.46 7.41 13.00 1.50Z" fill="#fff" stroke="#000" stroke-width="0.4"/><path d="M15.30 3.43L19.82 7.22" stroke="#000" stroke-width="0.3"/><path d="M13.00 1.50Q10.84 9.84 6.30 13.10Q6.85 7.54 13.00 1.50Z" fill="#fff" stroke="#000" stroke-width="0.4"/><path d="M11.50 4.10L7.05 11.81" stroke="#000" stroke-width="0.3"/><path d="M13.00 1.50Q19.29 7.22 19.99 12.69Q15.39 9.66 13.00 1.50Z" fill="#fff" stroke="#000" stroke-width="0.4"/><path d="M14.59 4.04L19.20 11.42" stroke="#000" stroke-width="0.3"/><path d="M13.00 1.50Q13.63 11.18 10.36 16.47Q9.10 10.38 13.00 1.50Z" fill="#fff" stroke="#000" stroke-width="0.4"/><path d="M12.48 4.45L10.62 14.99" stroke="#000" stroke-width="0.3"/><path d="M13.00 1.50Q17.13 9.88 16.04 15.78Q12.63 10.83 13.00 1.50Z" fill="#fff" stroke="#000" stroke-width="0.4"/><path d="M13.62 4.43L15.72 14.31" stroke="#000" stroke-width="0.3"/></svg></div>
<div style="left:882.3px;top:350.4px;width:28px;height:28px"><svg viewBox="0 0 26 26"><path d="M1.8 18.4A11.3 11.5 0 0 1 24.4 18.4Z" fill="#fff" stroke="#000" stroke-width="1.1"/><path d="M8.5 18.4A4.5 5.9 0 0 1 17.5 18.4Z" fill="#000"/></svg></div>
<div style="left:913px;top:350.4px;width:28px;height:28px"><svg viewBox="0 0 26 26"><path d="M12.9 4.85Q10 9 11.6 10.6Q12.8 11.6 15.6 11.7Q23.8 12.4 23.8 16Q23.4 20.4 12.9 20.4Q2.2 20.4 2.2 16Q2.4 12 9.4 11.4Q11.4 9.6 12.9 4.85Z" fill="#fff" stroke="#c4c4c4" stroke-width="0.8"/></svg></div>
<div style="left:636.5px;top:380.8px;width:28px;height:28px"><svg viewBox="0 0 26 26"><g fill="#000" stroke="none"><ellipse cx="4.3" cy="11" rx="2.2" ry="3.3" transform="rotate(-25 4.3 11)"/><ellipse cx="9.95" cy="6.65" rx="2.3" ry="3.7" transform="rotate(-6 9.95 6.65)"/><ellipse cx="16.9" cy="6.65" rx="2.3" ry="3.7" transform="rotate(6 16.9 6.65)"/><ellipse cx="22.8" cy="10.7" rx="2.2" ry="3.3" transform="rotate(25 22.8 10.7)"/><path d="M13.8 13.2Q17 13.2 19.2 17Q21.6 21 19.4 22.4Q17.6 23.2 15.6 22.4Q13.8 22 12 22.4Q10 23.2 8.4 22.4Q6 21 8.4 17Q10.6 13.2 13.8 13.2Z"/></g></svg></div>
<div style="left:667.2px;top:380.8px;width:28px;height:28px"><svg viewBox="0 0 26 26"><g fill="#000" stroke="none"><path d="M12.2 2.1C12.9 9 12.8 16 12.6 23Q11 24.7 8 23.9Q5.2 22.8 5.7 15.4C6.1 9 9 3.6 12.2 2.1Z"/><path d="M14.5 2.1C13.8 9 13.9 16 14.1 23Q16 24.5 18.9 23.7Q21.8 22.4 21.5 14.8C21 8.6 18 3.6 14.5 2.1Z"/></g></svg></div>
<div style="left:698px;top:380.8px;width:28px;height:28px"><svg viewBox="0 0 26 26"><g fill="#000" stroke="none"><ellipse cx="10.8" cy="9.3" rx="2.1" ry="3.0" transform="rotate(-6 10.8 9.3)"/><ellipse cx="16.3" cy="9.3" rx="2.1" ry="3.0" transform="rotate(6 16.3 9.3)"/><ellipse cx="7.6" cy="14.7" rx="2.0" ry="2.7" transform="rotate(-28 7.6 14.7)"/><ellipse cx="19.5" cy="14.2" rx="2.0" ry="2.7" transform="rotate(28 19.5 14.2)"/><path d="M11.05 5.84L10.80 3.80L10.15 5.76Z"/><path d="M16.65 5.76L16.00 3.80L15.75 5.84Z"/><path d="M6.39 11.17L4.80 9.40L5.61 11.63Z"/><path d="M21.17 11.45L22.00 9.40L20.43 10.95Z"/><path d="M13.6 15.3Q16 15.3 17.6 18.6Q19 21.8 16.4 22.3Q13.6 21.4 11 22.3Q8.2 21.8 9.6 18.6Q11.2 15.3 13.6 15.3Z"/></g></svg></div>
<div style="left:729.2px;top:380.8px;width:28px;height:28px"><svg viewBox="0 0 26 26"><g fill="#000" stroke="none"><path d="M11.8 1.9C12.1 9 12.1 16 11.9 22.6Q9 24.3 5.2 23.1Q2 21.8 2.6 15.2C3.2 8.6 7 3.2 11.8 1.9Z"/><path d="M14 1.9C13.7 9 13.7 16 14 22.6Q17 24.3 20.7 23.1Q23.9 21.8 23.3 15.2C22.6 8.6 18.8 3.2 14 1.9Z"/></g></svg></div>
<div style="left:760px;top:380.8px;width:28px;height:28px"><svg viewBox="0 0 26 26"><g fill="#000" stroke="none"><ellipse cx="10.6" cy="8.9" rx="2.0" ry="2.9" transform="rotate(-6 10.6 8.9)"/><ellipse cx="15.3" cy="8.9" rx="2.0" ry="2.9" transform="rotate(6 15.3 8.9)"/><ellipse cx="8" cy="14.2" rx="1.9" ry="2.7" transform="rotate(-30 8 14.2)"/><ellipse cx="17.7" cy="14.2" rx="1.9" ry="2.7" transform="rotate(30 17.7 14.2)"/><path d="M11.40 5.65L11.20 4.00L10.60 5.55Z"/><path d="M15.00 5.55L14.40 4.00L14.20 5.65Z"/><path d="M6.96 11.02L5.80 9.60L6.24 11.38Z"/><path d="M19.37 11.54L19.60 9.80L18.63 11.26Z"/><path d="M12.9 15.6L14.8 17.8L17.2 18.8Q18.4 21.6 16 22.7Q14.2 22.9 12.9 22.1Q11.6 22.9 9.8 22.7Q7.4 21.6 8.6 18.8L11 17.8Z"/></g></svg></div>
<div style="left:791px;top:380.8px;width:28px;height:28px"><svg viewBox="0 0 26 26"><g fill="#000" stroke="none"><ellipse cx="8.1" cy="8.65" rx="1.5" ry="3.5" transform="rotate(-4 8.1 8.65)"/><ellipse cx="16.4" cy="5.3" rx="1.6" ry="3.6" transform="rotate(2 16.4 5.3)"/><ellipse cx="12.7" cy="14.9" rx="1.35" ry="2.2" transform="rotate(-6 12.7 14.9)"/><ellipse cx="14.9" cy="21.9" rx="1.45" ry="2.3"/></g></svg></div>
<div style="left:821.3px;top:380.8px;width:28px;height:28px"><svg viewBox="0 0 26 26"><g fill="#000" stroke="none"><ellipse cx="6" cy="5.6" rx="4.4" ry="3.1" transform="rotate(-15 6 5.6)"/><ellipse cx="19.7" cy="5.6" rx="4.6" ry="3.1" transform="rotate(40 19.7 5.6)"/><ellipse cx="12.5" cy="10.3" rx="4.2" ry="2.9" transform="rotate(-50 12.5 10.3)"/><ellipse cx="4.8" cy="15.5" rx="3.1" ry="4.6" transform="rotate(5 4.8 15.5)"/><ellipse cx="19.7" cy="15.3" rx="4.6" ry="3.1" transform="rotate(40 19.7 15.3)"/><ellipse cx="12.5" cy="20.2" rx="4.6" ry="3.1" transform="rotate(-40 12.5 20.2)"/></g></svg></div>
<div style="left:851.8px;top:380.8px;width:28px;height:28px"><svg viewBox="0 0 26 26"><path d="M5.3 1.4H21.5V6.2L24.4 7.4L23.4 11.4L21.5 12.4V24.8H5.3V17.8L1.2 14.8L2.6 12L5.3 10.9Z" fill="#fff" stroke="#000" stroke-width="0.85"/><ellipse cx="13.2" cy="13" rx="4.4" ry="6.7" fill="#000"/></svg></div>
<div style="left:882.3px;top:380.8px;width:28px;height:28px"><svg viewBox="0 0 26 26"><rect x="4.8" y="1.4" width="16.5" height="23.4" fill="#fff" stroke="#000" stroke-width="0.85"/><ellipse cx="13.2" cy="13" rx="4.9" ry="7" fill="#000"/></svg></div>
<div style="left:913px;top:380.8px;width:28px;height:28px"><svg viewBox="0 0 26 26"><g fill="#000" stroke="none"><ellipse cx="6.5" cy="14.3" rx="1.8" ry="2.6" transform="rotate(-10 6.5 14.3)"/><ellipse cx="10" cy="7.6" rx="1.8" ry="2.6" transform="rotate(4 10 7.6)"/><ellipse cx="15" cy="5.3" rx="1.9" ry="2.6" transform="rotate(14 15 5.3)"/><ellipse cx="19" cy="11.2" rx="1.8" ry="2.6" transform="rotate(26 19 11.2)"/><path d="M13.6 13.2Q16.6 13.4 18.2 16.6Q20 20 17.4 20.6Q15.4 20.4 14.2 21.6Q12.8 23.4 10.6 22.8Q8 21.6 9.6 17.6Q11 13.4 13.6 13.2Z"/></g></svg></div>
<div style="left:636.5px;top:411.4px;width:28px;height:28px"><svg viewBox="0 0 26 26"><g fill="#000" stroke="none"><path d="M11.2 1.9Q13.6 6 13.4 12.6Q13.2 17.6 10.6 17.9Q7.9 17.6 7.8 12.6Q8 6 11.2 1.9Z"/><path d="M16.4 1.9Q14 6 14.2 12.6Q14.4 17.6 17 17.9Q19.8 17.6 19.9 12.6Q19.6 6 16.4 1.9Z"/><circle cx="9.75" cy="22.5" r="1.4"/><circle cx="17.2" cy="22.5" r="1.4"/></g></svg></div>
<div style="left:667.2px;top:411.4px;width:28px;height:28px"><svg viewBox="0 0 26 26"><circle cx="13" cy="13" r="10.4" fill="#000"/><path d="M13.92 23.47Q10.83 23.80 8.10 22.30" stroke="#000" stroke-width="0.7" fill="none"/><path d="M23.23 17.54Q21.23 21.62 17.07 23.43" stroke="#000" stroke-width="0.7" fill="none"/><path d="M14.02 2.35Q17.59 2.80 20.30 5.18" stroke="#000" stroke-width="0.7" fill="none"/><path d="M17.80 22.09Q15.39 24.86 12.09 23.24" stroke="#000" stroke-width="0.7" fill="none"/><path d="M18.25 3.29Q22.48 7.28 24.04 12.89" stroke="#000" stroke-width="0.7" fill="none"/><path d="M8.98 23.19Q4.02 20.96 2.41 15.77" stroke="#000" stroke-width="0.7" fill="none"/><path d="M20.87 5.62Q23.45 7.65 23.59 10.93" stroke="#000" stroke-width="0.7" fill="none"/><path d="M2.39 12.60Q2.74 9.26 4.63 6.48" stroke="#000" stroke-width="0.7" fill="none"/><path d="M22.82 8.72Q24.11 14.59 21.23 19.86" stroke="#000" stroke-width="0.7" fill="none"/><path d="M22.37 6.96Q24.90 11.54 23.55 16.59" stroke="#000" stroke-width="0.7" fill="none"/><path d="M2.24 12.43Q2.72 8.07 5.82 4.96" stroke="#000" stroke-width="0.7" fill="none"/><path d="M18.85 22.38Q15.16 23.64 11.28 23.92" stroke="#000" stroke-width="0.7" fill="none"/><path d="M22.93 15.97Q21.37 20.96 16.47 22.77" stroke="#000" stroke-width="0.7" fill="none"/><path d="M1.89 15.03Q2.12 10.92 3.42 7.01" stroke="#000" stroke-width="0.7" fill="none"/><path d="M3.76 18.64Q2.10 15.52 2.23 11.98" stroke="#000" stroke-width="0.7" fill="none"/><path d="M6.57 21.20Q2.31 17.45 2.65 11.78" stroke="#000" stroke-width="0.7" fill="none"/><path d="M21.31 7.30Q23.57 9.55 23.08 12.69" stroke="#000" stroke-width="0.7" fill="none"/><path d="M13.98 2.74Q18.99 3.46 21.82 7.66" stroke="#000" stroke-width="0.7" fill="none"/><path d="M17.42 22.03Q13.53 24.76 9.40 22.39" stroke="#000" stroke-width="0.7" fill="none"/><path d="M21.70 6.34Q25.11 12.15 22.54 18.39" stroke="#000" stroke-width="0.7" fill="none"/><path d="M24.18 14.28Q23.62 18.33 20.71 21.20" stroke="#000" stroke-width="0.7" fill="none"/><path d="M3.86 18.77Q1.06 12.79 4.07 6.92" stroke="#000" stroke-width="0.7" fill="none"/><path d="M10.15 23.19Q6.89 22.13 4.67 19.52" stroke="#000" stroke-width="0.7" fill="none"/><path d="M5.32 20.06Q2.32 14.69 3.52 8.66" stroke="#000" stroke-width="0.7" fill="none"/><path d="M23.59 16.06Q22.39 19.30 19.85 21.63" stroke="#000" stroke-width="0.7" fill="none"/><path d="M10.17 23.92Q7.17 22.79 4.74 20.68" stroke="#000" stroke-width="0.7" fill="none"/><path d="M15.63 22.72Q12.93 24.04 10.24 22.69" stroke="#000" stroke-width="0.7" fill="none"/><path d="M8.54 3.99Q11.20 1.66 14.45 3.05" stroke="#000" stroke-width="0.7" fill="none"/><path d="M13.06 23.16Q6.55 22.57 3.56 16.75" stroke="#000" stroke-width="0.7" fill="none"/><path d="M14.68 1.84Q18.92 3.18 22.09 6.31" stroke="#000" stroke-width="0.7" fill="none"/><path d="M13.39 20.69A7.7 7.7 0 0 1 7.69 18.40" stroke="#fff" stroke-width="0.45" fill="none"/><path d="M13.09 22.76A9.8 9.8 0 0 1 3.90 16.51" stroke="#fff" stroke-width="0.45" fill="none"/><path d="M21.07 14.63A8.2 8.2 0 0 1 17.81 19.09" stroke="#fff" stroke-width="0.45" fill="none"/><path d="M13.93 20.91A8.0 8.0 0 0 1 6.61 16.42" stroke="#fff" stroke-width="0.45" fill="none"/><path d="M22.15 8.55A10.2 10.2 0 0 1 21.79 17.80" stroke="#fff" stroke-width="0.45" fill="none"/><path d="M20.85 7.37A9.7 9.7 0 0 1 22.25 16.92" stroke="#fff" stroke-width="0.45" fill="none"/><path d="M4.86 13.29A8.1 8.1 0 0 1 5.49 8.51" stroke="#fff" stroke-width="0.45" fill="none"/><path d="M19.85 8.01A8.5 8.5 0 0 1 20.15 18.00" stroke="#fff" stroke-width="0.45" fill="none"/><path d="M15.97 3.75A9.7 9.7 0 0 1 22.47 10.62" stroke="#fff" stroke-width="0.45" fill="none"/><path d="M8.32 6.15A8.3 8.3 0 0 1 16.90 4.92" stroke="#fff" stroke-width="0.45" fill="none"/><path d="M22.75 10.25A10.1 10.1 0 0 1 23.43 16.05" stroke="#fff" stroke-width="0.45" fill="none"/><path d="M8.12 4.34A9.9 9.9 0 0 1 13.21 3.66" stroke="#fff" stroke-width="0.45" fill="none"/><path d="M20.61 11.48A7.8 7.8 0 0 1 17.84 18.36" stroke="#fff" stroke-width="0.45" fill="none"/><path d="M6.70 5.84A9.5 9.5 0 0 1 15.37 3.05" stroke="#fff" stroke-width="0.45" fill="none"/><path d="M14.96 22.80A10.0 10.0 0 0 1 10.23 21.79" stroke="#fff" stroke-width="0.45" fill="none"/><path d="M19.92 6.20A9.7 9.7 0 0 1 22.99 11.14" stroke="#fff" stroke-width="0.45" fill="none"/><ellipse cx="12.8" cy="12.6" rx="7.0" ry="6.2" transform="rotate(10 12.8 12.6)" fill="#fff"/><ellipse cx="14.2" cy="9.1" rx="2.6" ry="2.0" transform="rotate(10 14.2 9.1)" fill="#000"/><ellipse cx="9.1" cy="13.2" rx="2.3" ry="2.8" transform="rotate(10 9.1 13.2)" fill="#000"/><ellipse cx="15.7" cy="15.5" rx="2.8" ry="2.2" transform="rotate(-20 15.7 15.5)" fill="#000"/></svg></div>
<div style="left:698px;top:411.4px;width:28px;height:28px"><svg viewBox="0 0 26 26"><circle cx="13" cy="13" r="10.25" fill="#fff" stroke="#000" stroke-width="1.9"/><ellipse cx="14" cy="8.2" rx="3" ry="2.8" fill="#000"/><ellipse cx="9.2" cy="14" rx="2.8" ry="3.1" fill="#000"/><ellipse cx="16.7" cy="15.9" rx="3.1" ry="2.9" fill="#000"/></svg></div>
<div style="left:729.2px;top:411.4px;width:28px;height:28px"><svg viewBox="0 0 26 26"><circle cx="13" cy="13" r="10.4" fill="#000"/><path d="M2.30 16.30Q1.67 11.33 3.71 6.74" stroke="#000" stroke-width="0.7" fill="none"/><path d="M2.77 12.50Q2.92 7.43 7.13 4.61" stroke="#000" stroke-width="0.7" fill="none"/><path d="M6.07 5.63Q10.47 2.06 15.99 3.33" stroke="#000" stroke-width="0.7" fill="none"/><path d="M22.18 18.88Q17.90 22.69 12.28 23.88" stroke="#000" stroke-width="0.7" fill="none"/><path d="M23.78 11.79Q23.37 18.34 18.27 22.48" stroke="#000" stroke-width="0.7" fill="none"/><path d="M18.87 21.93Q16.49 23.31 13.76 23.66" stroke="#000" stroke-width="0.7" fill="none"/><path d="M16.68 22.34Q13.47 24.44 10.09 22.61" stroke="#000" stroke-width="0.7" fill="none"/><path d="M3.06 16.90Q1.47 11.01 4.95 5.99" stroke="#000" stroke-width="0.7" fill="none"/><path d="M2.41 13.02Q3.08 7.83 6.94 4.31" stroke="#000" stroke-width="0.7" fill="none"/><path d="M24.09 12.84Q22.84 19.50 17.20 23.27" stroke="#000" stroke-width="0.7" fill="none"/><path d="M8.86 22.52Q5.65 21.04 3.89 17.97" stroke="#000" stroke-width="0.7" fill="none"/><path d="M14.13 1.96Q18.36 3.01 21.57 5.95" stroke="#000" stroke-width="0.7" fill="none"/><path d="M22.66 10.39Q23.65 16.10 19.75 20.38" stroke="#000" stroke-width="0.7" fill="none"/><path d="M22.53 6.98Q24.23 11.31 23.88 15.96" stroke="#000" stroke-width="0.7" fill="none"/><path d="M22.87 17.88Q19.69 21.96 14.88 23.85" stroke="#000" stroke-width="0.7" fill="none"/><path d="M22.61 18.86Q20.24 22.39 16.22 23.78" stroke="#000" stroke-width="0.7" fill="none"/><path d="M20.47 19.84Q18.15 22.59 14.58 23.01" stroke="#000" stroke-width="0.7" fill="none"/><path d="M16.12 2.74Q19.52 3.62 21.53 6.50" stroke="#000" stroke-width="0.7" fill="none"/><path d="M16.70 22.47Q11.44 24.60 6.93 21.16" stroke="#000" stroke-width="0.7" fill="none"/><path d="M20.64 19.87Q17.78 23.11 13.45 23.27" stroke="#000" stroke-width="0.7" fill="none"/><path d="M23.22 11.11Q24.31 17.11 19.63 21.01" stroke="#000" stroke-width="0.7" fill="none"/><path d="M15.72 23.77Q11.35 24.58 7.39 22.59" stroke="#000" stroke-width="0.7" fill="none"/><path d="M21.30 19.06Q16.77 23.51 10.44 22.95" stroke="#000" stroke-width="0.7" fill="none"/><path d="M14.48 2.72Q18.30 3.47 20.96 6.33" stroke="#000" stroke-width="0.7" fill="none"/><path d="M21.71 18.53Q19.09 22.92 14.00 23.27" stroke="#000" stroke-width="0.7" fill="none"/><path d="M5.21 21.12Q2.42 17.44 1.75 12.87" stroke="#000" stroke-width="0.7" fill="none"/><path d="M3.87 8.38Q7.25 3.60 13.04 2.76" stroke="#000" stroke-width="0.7" fill="none"/><path d="M21.66 7.38Q24.06 12.57 22.07 17.92" stroke="#000" stroke-width="0.7" fill="none"/><path d="M12.32 2.77Q18.95 2.43 22.10 8.27" stroke="#000" stroke-width="0.7" fill="none"/><path d="M20.79 5.89Q23.52 9.99 23.37 14.91" stroke="#000" stroke-width="0.7" fill="none"/><path d="M20.98 14.98A8.2 8.2 0 0 1 13.49 21.53" stroke="#fff" stroke-width="0.45" fill="none"/><path d="M12.60 22.14A9.2 9.2 0 0 1 4.77 16.17" stroke="#fff" stroke-width="0.45" fill="none"/><path d="M16.51 19.94A7.8 7.8 0 0 1 8.81 19.03" stroke="#fff" stroke-width="0.45" fill="none"/><path d="M4.44 9.65A9.2 9.2 0 0 1 12.86 4.16" stroke="#fff" stroke-width="0.45" fill="none"/><path d="M19.64 9.21A7.6 7.6 0 0 1 20.20 14.04" stroke="#fff" stroke-width="0.45" fill="none"/><path d="M5.41 15.70A8.1 8.1 0 0 1 5.32 11.39" stroke="#fff" stroke-width="0.45" fill="none"/><path d="M5.32 9.26A8.5 8.5 0 0 1 8.51 5.01" stroke="#fff" stroke-width="0.45" fill="none"/><path d="M22.33 11.85A9.4 9.4 0 0 1 18.90 20.48" stroke="#fff" stroke-width="0.45" fill="none"/><path d="M17.86 18.90A7.6 7.6 0 0 1 14.33 21.20" stroke="#fff" stroke-width="0.45" fill="none"/><path d="M10.68 5.71A7.7 7.7 0 0 1 19.46 8.50" stroke="#fff" stroke-width="0.45" fill="none"/><path d="M4.62 13.94A8.4 8.4 0 0 1 7.80 5.37" stroke="#fff" stroke-width="0.45" fill="none"/><path d="M21.47 17.33A9.5 9.5 0 0 1 14.63 23.03" stroke="#fff" stroke-width="0.45" fill="none"/><path d="M12.22 3.37A9.7 9.7 0 0 1 21.59 7.26" stroke="#fff" stroke-width="0.45" fill="none"/><path d="M7.06 20.98A9.9 9.9 0 0 1 2.54 11.77" stroke="#fff" stroke-width="0.45" fill="none"/><path d="M4.46 17.90A9.8 9.8 0 0 1 4.85 7.28" stroke="#fff" stroke-width="0.45" fill="none"/><path d="M6.55 6.56A9.1 9.1 0 0 1 13.19 3.71" stroke="#fff" stroke-width="0.45" fill="none"/><ellipse cx="12.9" cy="13" rx="6.2" ry="7.6" transform="rotate(-32 12.9 13)" fill="#fff"/><ellipse cx="13.9" cy="9.7" rx="2.3" ry="2.1" transform="rotate(0 13.9 9.7)" fill="#000"/><ellipse cx="9.6" cy="13.8" rx="2.1" ry="2.55" transform="rotate(0 9.6 13.8)" fill="#000"/><ellipse cx="14.8" cy="16.7" rx="2.3" ry="2.1" transform="rotate(0 14.8 16.7)" fill="#000"/></svg></div>
<div style="left:760px;top:411.4px;width:28px;height:28px"><svg viewBox="0 0 26 26"><g fill="#000" stroke="none"><ellipse cx="6.97" cy="10.7" rx="1.3" ry="1.9" transform="rotate(-24 6.97 10.7)"/><ellipse cx="9.9" cy="7.4" rx="1.3" ry="1.9" transform="rotate(-8 9.9 7.4)"/><ellipse cx="13.3" cy="6.8" rx="1.3" ry="1.9"/><ellipse cx="16.7" cy="8.6" rx="1.3" ry="1.9" transform="rotate(14 16.7 8.6)"/><ellipse cx="18.9" cy="12.9" rx="1.2" ry="1.8" transform="rotate(28 18.9 12.9)"/><ellipse cx="6.2" cy="7.6" rx="0.35" ry="0.6"/><ellipse cx="9.5" cy="4.2" rx="0.35" ry="0.6"/><ellipse cx="13.4" cy="3.6" rx="0.35" ry="0.6"/><ellipse cx="17.3" cy="5.4" rx="0.35" ry="0.6"/><ellipse cx="20" cy="9.8" rx="0.35" ry="0.6"/><path d="M11.8 11.2Q16.6 11.6 16.5 15.6Q16 19.4 14 22.8Q12.2 25.4 10.4 22.8Q7.2 17.4 7.2 14.6Q7.4 11.2 11.8 11.2Z"/></g></svg></div>
<div style="left:791px;top:411.4px;width:28px;height:28px"><svg viewBox="0 0 26 26"><g fill="#000" stroke="none"><path d="M12 2Q12.9 12 12.5 22.4Q10 24.4 6.4 23.2Q3.4 21.6 4 17.4Q5.6 8.4 12 2Z"/><path d="M14.2 2Q13.5 12 13.9 22.4Q16.4 24.4 19.4 23.2Q22 21.6 21.2 17.4Q19.8 8.4 14.2 2Z"/></g></svg></div>
<div style="left:821.3px;top:411.4px;width:28px;height:28px"><svg viewBox="0 0 26 26"><g fill="#000" stroke="none"><path d="M2.8 5.4L5.6 4.2L8.2 13.2L6.8 13.7Z"/><path d="M1.6 7L4 6.2M2 3.2L3.8 5.2M4.4 2L4.8 4.6M6.8 2.8L6 5" stroke="#000" stroke-width="1.0" stroke-linecap="round"/><path d="M23 5.4L20.2 4.2L17.6 13.2L19 13.7Z"/><path d="M24.2 7L21.8 6.2M23.8 3.2L22 5.2M21.4 2L21 4.6M19 2.8L19.8 5" stroke="#000" stroke-width="1.0" stroke-linecap="round"/><path d="M6.8 16.2Q8.6 15 10.2 15.8L11.2 21.6L10.6 23.2L9.6 22L9 23.4L8 21.8Z"/><path d="M18.6 16.2Q16.8 15 15.2 15.8L14.2 21.6L14.8 23.2L15.8 22L16.4 23.4L17.4 21.8Z"/></g></svg></div>
<div style="left:851.8px;top:411.4px;width:28px;height:28px"><svg viewBox="0 0 26 26"><g fill="#000" stroke="none"><path d="M10.4 1.4Q13.6 8 13.2 15Q12.6 18.2 9.8 18Q6.8 17.4 6.6 13Q6.8 6 10.4 1.4Z"/><path d="M18 1.4Q14.8 8 15.2 15Q15.8 18.2 18.6 18Q21.6 17.4 21.8 13Q21.6 6 18 1.4Z"/><path d="M1.8 17.8L7.8 21.6L6.4 24Z"/><path d="M23.8 17.8L17.8 22L19.4 24.6Z"/></g></svg></div>
<div style="left:882.3px;top:411.4px;width:28px;height:28px"><svg viewBox="0 0 26 26"><g fill="#000" stroke="none"><ellipse cx="10.97" cy="8.56" rx="1.75" ry="3.2" transform="rotate(-4 10.97 8.56)"/><ellipse cx="15.3" cy="8.56" rx="1.75" ry="3.2" transform="rotate(4 15.3 8.56)"/><ellipse cx="7.6" cy="13.6" rx="1.75" ry="2.9" transform="rotate(-22 7.6 13.6)"/><ellipse cx="18.8" cy="13.6" rx="1.75" ry="2.9" transform="rotate(22 18.8 13.6)"/><path d="M11.60 4.65L11.40 3.00L10.80 4.55Z"/><path d="M15.40 4.55L14.80 3.00L14.60 4.65Z"/><path d="M6.57 9.66L5.60 8.20L5.83 9.94Z"/><path d="M20.57 9.94L20.80 8.20L19.83 9.66Z"/><path d="M13.3 15.8Q16 15.8 17.8 19Q19.6 22.4 16.8 23.1Q13.3 22 10 23.1Q7 22.4 8.8 19Q10.6 15.8 13.3 15.8Z"/></g></svg></div>
<div style="left:627px;top:330.6px;width:363.1px;height:149.8px;border:6.8px solid #e88f06;box-sizing:border-box;border-radius:3.5px;"></div>
<div style="left:277.6px;top:551px;width:6.8px;height:10px"><svg viewBox="0 0 6 8.5"><path d="M0 0L6 4.25L0 8.5Z" fill="#222"/></svg></div>
<div class="field" style="left:273px;top:572.4px;width:654px;height:18.2px;"></div>
<div style="left:908px;top:578px;width:11.5px;height:8px"><svg viewBox="0 0 11.5 8"><path d="M0 4L3.4 0.3H10.6Q11.3 0.3 11.3 1V7Q11.3 7.7 10.6 7.7H3.4Z" fill="#b4b4b4"/><path d="M5.3 2.3L8.9 5.7M8.9 2.3L5.3 5.7" stroke="#fff" stroke-width="1.2"/></svg></div>
<div class="btn" style="left:932.2px;top:572.4px;width:19.2px;height:17.8px;"></div>
<div class="btn" style="left:951px;top:572.4px;width:10.7px;height:17.8px;"></div>
<div style="left:938.3px;top:584.3px;width:1px;height:1px;background:#555;"></div><div style="left:941.3px;top:584.3px;width:1px;height:1px;background:#555;"></div><div style="left:944.3px;top:584.3px;width:1px;height:1px;background:#555;"></div>
<div style="left:953.5px;top:580.5px;width:6px;height:4px"><svg viewBox="0 0 6 4"><path d="M0 0L6 0L3 3.6Z" fill="#4a4a4a"/></svg></div>
<div style="left:970px;top:575px;width:19.5px;height:14.5px"><svg viewBox="0 0 19.5 14.5"><path d="M0.2 6.3L4.8 1.2V11.6Z" fill="#9a9a9a"/><path d="M4.6 0.6H15V12.4H4.6Z" fill="#fafafa" stroke="#727272" stroke-width="0.9"/><path d="M6.6 3.6H13M6.6 9.4H13" stroke="#3a3a3a" stroke-width="1.3"/><path d="M5 6.4H14.6" stroke="#8a8a8a" stroke-width="0.7"/><path d="M14 9.8H19.4L16.7 13.4Z" fill="#3c3c3c"/></svg></div>
<div style="left:265.9px;top:607.6px;width:11.2px;height:11.2px;background:#fff;border:1px solid #555;box-sizing:border-box;"></div>
<div style="left:267.5px;top:609.6px;width:8px;height:7.4px"><svg viewBox="0 0 8 7"><path d="M0.8 3.4L3 6L7.2 0.8" fill="none" stroke="#111" stroke-width="1.5"/></svg></div>
<div style="left:417.2px;top:606.3px;width:19.5px;height:14.5px"><svg viewBox="0 0 19.5 14.5"><path d="M0.2 6.3L4.8 1.2V11.6Z" fill="#9a9a9a"/><path d="M4.6 0.6H15V12.4H4.6Z" fill="#fafafa" stroke="#727272" stroke-width="0.9"/><path d="M6.6 3.6H13M6.6 9.4H13" stroke="#3a3a3a" stroke-width="1.3"/><path d="M5 6.4H14.6" stroke="#8a8a8a" stroke-width="0.7"/><path d="M14 9.8H19.4L16.7 13.4Z" fill="#3c3c3c"/></svg></div>
<div style="left:470.8px;top:606.9px;width:11.8px;height:11.8px;background:#fff;border:1px solid #c4c4c4;box-sizing:border-box;"></div>
<div class="btn dis" style="left:522.3px;top:603.7px;width:19.5px;height:19px;"><div style="position:absolute;left:4px;top:3.5px;width:11px;height:11px"><svg viewBox="0 0 11 11"><path d="M5.5 0.6L7 4.1L10.7 4.4L7.9 6.9L8.8 10.5L5.5 8.6L2.2 10.5L3.1 6.9L0.3 4.4L4 4.1Z" fill="#d9d2bd"/></svg></div></div>
<div style="left:268.3px;top:646px;width:6.8px;height:9.6px"><svg viewBox="0 0 6 8.5"><path d="M0 0L6 4.25L0 8.5Z" fill="#222"/></svg></div>
<div class="btn" style="left:265.2px;top:664.4px;width:67.6px;height:17px;"></div>
<div style="left:322.8px;top:671.3px;width:5px;height:3px"><svg viewBox="0 0 6 4"><path d="M0 0L6 0L3 3.6Z" fill="#4a4a4a"/></svg></div>
<div class="btn" style="left:733px;top:664px;width:68.3px;height:17.4px;border-color:#3c96e0;box-shadow:inset 0 0 0 1px #b9dcf6;"></div>
<div class="btn" style="left:806.3px;top:664px;width:68.3px;height:17.4px;"></div>
<div class="btn" style="left:879.3px;top:664px;width:68.3px;height:17.4px;"></div>
<div class="btn" style="left:952.3px;top:664px;width:68.3px;height:17.4px;"></div>
<span class="t" id="t0" style="left:25.6px;top:4.90px;font-size:11.5px;font-weight:400;color:#000;transform:scaleX(0.8670);">Propriétés de la couche — mes_donnees_taxon_points — Symbologie</span>
<span class="t" id="t1" style="left:32.5px;top:57.83px;font-size:11.5px;font-weight:400;color:#fff;transform:scaleX(0.9299);">Information</span>
<span class="t" id="t2" style="left:32.5px;top:88.48px;font-size:11.5px;font-weight:400;color:#fff;transform:scaleX(0.8370);">Source</span>
<span class="t" id="t3" style="left:35px;top:119.12px;font-size:11.5px;font-weight:400;color:#000;transform:scaleX(0.8936);">Symbologie</span>
<span class="t" id="t4" style="left:32.5px;top:149.77px;font-size:11.5px;font-weight:400;color:#fff;transform:scaleX(0.8503);">Étiquettes</span>
<span class="t" id="t5" style="left:32.5px;top:180.42px;font-size:11.5px;font-weight:400;color:#fff;transform:scaleX(0.8570);">Masques</span>
<span class="t" id="t6" style="left:32.5px;top:211.07px;font-size:11.5px;font-weight:400;color:#fff;transform:scaleX(0.8224);">Vue 3D</span>
<span class="t" id="t7" style="left:32.5px;top:241.72px;font-size:11.5px;font-weight:400;color:#fff;transform:scaleX(0.8667);">Diagrammes</span>
<span class="t" id="t8" style="left:32.5px;top:272.37px;font-size:11.5px;font-weight:400;color:#fff;transform:scaleX(0.8639);">Champs</span>
<span class="t" id="t9" style="left:32.5px;top:303.02px;font-size:11.5px;font-weight:400;color:#fff;transform:scaleX(0.8964);">Formulaire d'attributs</span>
<span class="t" id="t10" style="left:32.5px;top:333.67px;font-size:11.5px;font-weight:400;color:#fff;transform:scaleX(0.8635);">Jointures</span>
<span class="t" id="t11" style="left:32.5px;top:364.32px;font-size:11.5px;font-weight:400;color:#fff;transform:scaleX(0.8650);">Stockage auxiliaire</span>
<span class="t" id="t12" style="left:32.5px;top:394.97px;font-size:11.5px;font-weight:400;color:#fff;transform:scaleX(0.9014);">Actions</span>
<span class="t" id="t13" style="left:32.5px;top:425.62px;font-size:11.5px;font-weight:400;color:#fff;transform:scaleX(0.9110);">Affichage</span>
<span class="t" id="t14" style="left:32.5px;top:456.27px;font-size:11.5px;font-weight:400;color:#fff;transform:scaleX(0.8409);">Rendu</span>
<span class="t" id="t15" style="left:32.5px;top:486.92px;font-size:11.5px;font-weight:400;color:#fff;transform:scaleX(0.8877);">Temporel</span>
<span class="t" id="t16" style="left:32.5px;top:517.58px;font-size:11.5px;font-weight:400;color:#fff;transform:scaleX(0.8324);">Variables</span>
<span class="t" id="t17" style="left:32.5px;top:548.23px;font-size:11.5px;font-weight:400;color:#fff;transform:scaleX(0.8751);">Métadonnées</span>
<span class="t" id="t18" style="left:32.5px;top:578.88px;font-size:11.5px;font-weight:400;color:#fff;transform:scaleX(0.8453);">Dépendances</span>
<span class="t" id="t19" style="left:32.5px;top:609.52px;font-size:11.5px;font-weight:400;color:#fff;transform:scaleX(0.8486);">Légende</span>
<span class="t" id="t20" style="left:32.5px;top:640.18px;font-size:11.5px;font-weight:400;color:#fff;transform:scaleX(0.7945);">QGIS Server</span>
<span class="t" id="t21" style="left:32.5px;top:670.83px;font-size:11.5px;font-weight:400;color:#fff;transform:scaleX(0.9004);">Numérisation</span>
<span class="t" id="t22" style="left:285.2px;top:32.70px;font-size:10px;font-weight:400;color:#000;transform:scaleX(0.8831);">Symbole Unique</span>
<span class="t" id="t23" style="left:425px;top:56.20px;font-size:11.5px;font-weight:700;color:#000;transform:scaleX(0.8553);">Symbole</span>
<span class="t" id="t24" style="left:441.5px;top:71.20px;font-size:11.5px;font-weight:400;color:#000;transform:scaleX(0.8168);">Symbole SVG</span>
<span class="t" id="t25" style="left:272.5px;top:188.20px;font-size:10px;font-weight:400;color:#000;transform:scaleX(0.9396);">Rotation</span>
<span class="t" id="t26" style="left:376.7px;top:188.20px;font-size:10px;font-weight:400;color:#000;transform:scaleX(0.9448);">0,00 °</span>
<span class="t" id="t27" style="left:272.5px;top:225.70px;font-size:10px;font-weight:400;color:#000;transform:scaleX(0.8754);">Décalage</span>
<span class="t" id="t28" style="left:373px;top:214.10px;font-size:10px;font-weight:400;color:#000;transform:scaleX(1.1000);">x</span>
<span class="t" id="t29" style="left:387px;top:214.10px;font-size:10px;font-weight:400;color:#000;transform:scaleX(0.9492);">0,800000</span>
<span class="t" id="t30" style="left:373px;top:237.70px;font-size:10px;font-weight:400;color:#000;transform:scaleX(1.1000);">y</span>
<span class="t" id="t31" style="left:387px;top:237.70px;font-size:10px;font-weight:400;color:#000;transform:scaleX(0.9324);">-6,600000</span>
<span class="t" id="t32" style="left:376.7px;top:262.90px;font-size:10px;font-weight:400;color:#000;transform:scaleX(0.9493);">Centre vertical</span>
<span class="t" id="t33" style="left:272.5px;top:277.10px;font-size:10px;font-weight:400;color:#000;transform:scaleX(0.9106);">Point d'ancrage</span>
<span class="t" id="t34" style="left:376.7px;top:290.30px;font-size:10px;font-weight:400;color:#000;transform:scaleX(0.9231);">Centre horizontal</span>
<span class="t" id="t35" style="left:871px;top:225.40px;font-size:10px;font-weight:400;color:#000;transform:scaleX(0.8790);">Millimètres</span>
<span class="t" id="t36" style="left:291px;top:313.20px;font-size:10px;font-weight:700;color:#000;transform:scaleX(0.9789);">Navigateur SVG</span>
<span class="t" id="t37" style="left:283px;top:335.70px;font-size:10px;font-weight:400;color:#000;transform:scaleX(0.8512);">Groupes SVG</span>
<span class="t" id="t38" style="left:322.7px;top:350.90px;font-size:11.5px;font-weight:400;color:#000;transform:scaleX(0.8377);">svg</span>
<span class="t" id="t39" style="left:322.7px;top:366.40px;font-size:11.5px;font-weight:400;color:#000;transform:scaleX(0.8377);">svg</span>
<span class="t" id="t40" style="left:322.7px;top:381.70px;font-size:11.5px;font-weight:400;color:#000;transform:scaleX(0.8994);">collections</span>
<span class="t" id="t41" style="left:339px;top:397.00px;font-size:11.5px;font-weight:400;color:#000;transform:scaleX(0.8858);">Animal silhouettes (Alina's Repository)</span>
<span class="t" id="t42" style="left:339px;top:412.40px;font-size:11.5px;font-weight:400;color:#000;transform:scaleX(0.8764);">Animal tracks and signs (Alina's Repository)</span>
<span class="t" id="t43" style="left:322.7px;top:427.60px;font-size:11.5px;font-weight:400;color:#000;transform:scaleX(0.8870);">Symboles de l'application</span>
<span class="t" id="t44" style="left:634.6px;top:335.70px;font-size:10px;font-weight:400;color:#000;transform:scaleX(0.8536);">Images SVG</span>
<span class="t" id="t45" style="left:291px;top:548.40px;font-size:10px;font-weight:700;color:#000;transform:scaleX(0.9963);">Paramètres SVG dynamiques</span>
<span class="t" id="t46" style="left:275.5px;top:574.70px;font-size:10px;font-weight:400;color:#000;transform:scaleX(0.9241);">C:/Users/filip/AppData/Roaming/QGIS/QGIS3/profiles/default/resource_sharing/collections/Animal tracks and signs (Alina's Repository)/svg/bear.svg</span>
<span class="t" id="t47" style="left:281.5px;top:606.20px;font-size:10px;font-weight:400;color:#000;transform:scaleX(0.8995);">Activer la couche de symboles</span>
<span class="t" id="t48" style="left:486px;top:606.20px;font-size:10px;font-weight:400;color:#000;transform:scaleX(0.9846);">Effets</span>
<span class="t" id="t49" style="left:282px;top:642.70px;font-size:10px;font-weight:700;color:#000;transform:scaleX(0.9837);">Rendu de couche</span>
<span class="t" id="t50" style="left:283px;top:665.70px;font-size:10px;font-weight:400;color:#000;transform:scaleX(0.8995);">Style</span>
<span class="t" id="t51" style="left:760.2px;top:665.70px;font-size:10px;font-weight:400;color:#000;transform:scaleX(0.8995);">OK</span>
<span class="t" id="t52" style="left:823.4px;top:665.70px;font-size:10px;font-weight:400;color:#000;transform:scaleX(0.9110);">Annuler</span>
<span class="t" id="t53" style="left:893.2px;top:665.70px;font-size:10px;font-weight:400;color:#000;transform:scaleX(0.9014);">Appliquer</span>
<span class="t" id="t54" style="left:976.8px;top:665.70px;font-size:10px;font-weight:400;color:#000;transform:scaleX(0.8693);">Aide</span>
<div style="left:0px;top:0px;width:1024px;height:685px;border:1px solid #6a6a6a;box-sizing:border-box;pointer-events:none;"></div>
</div></body></html>
